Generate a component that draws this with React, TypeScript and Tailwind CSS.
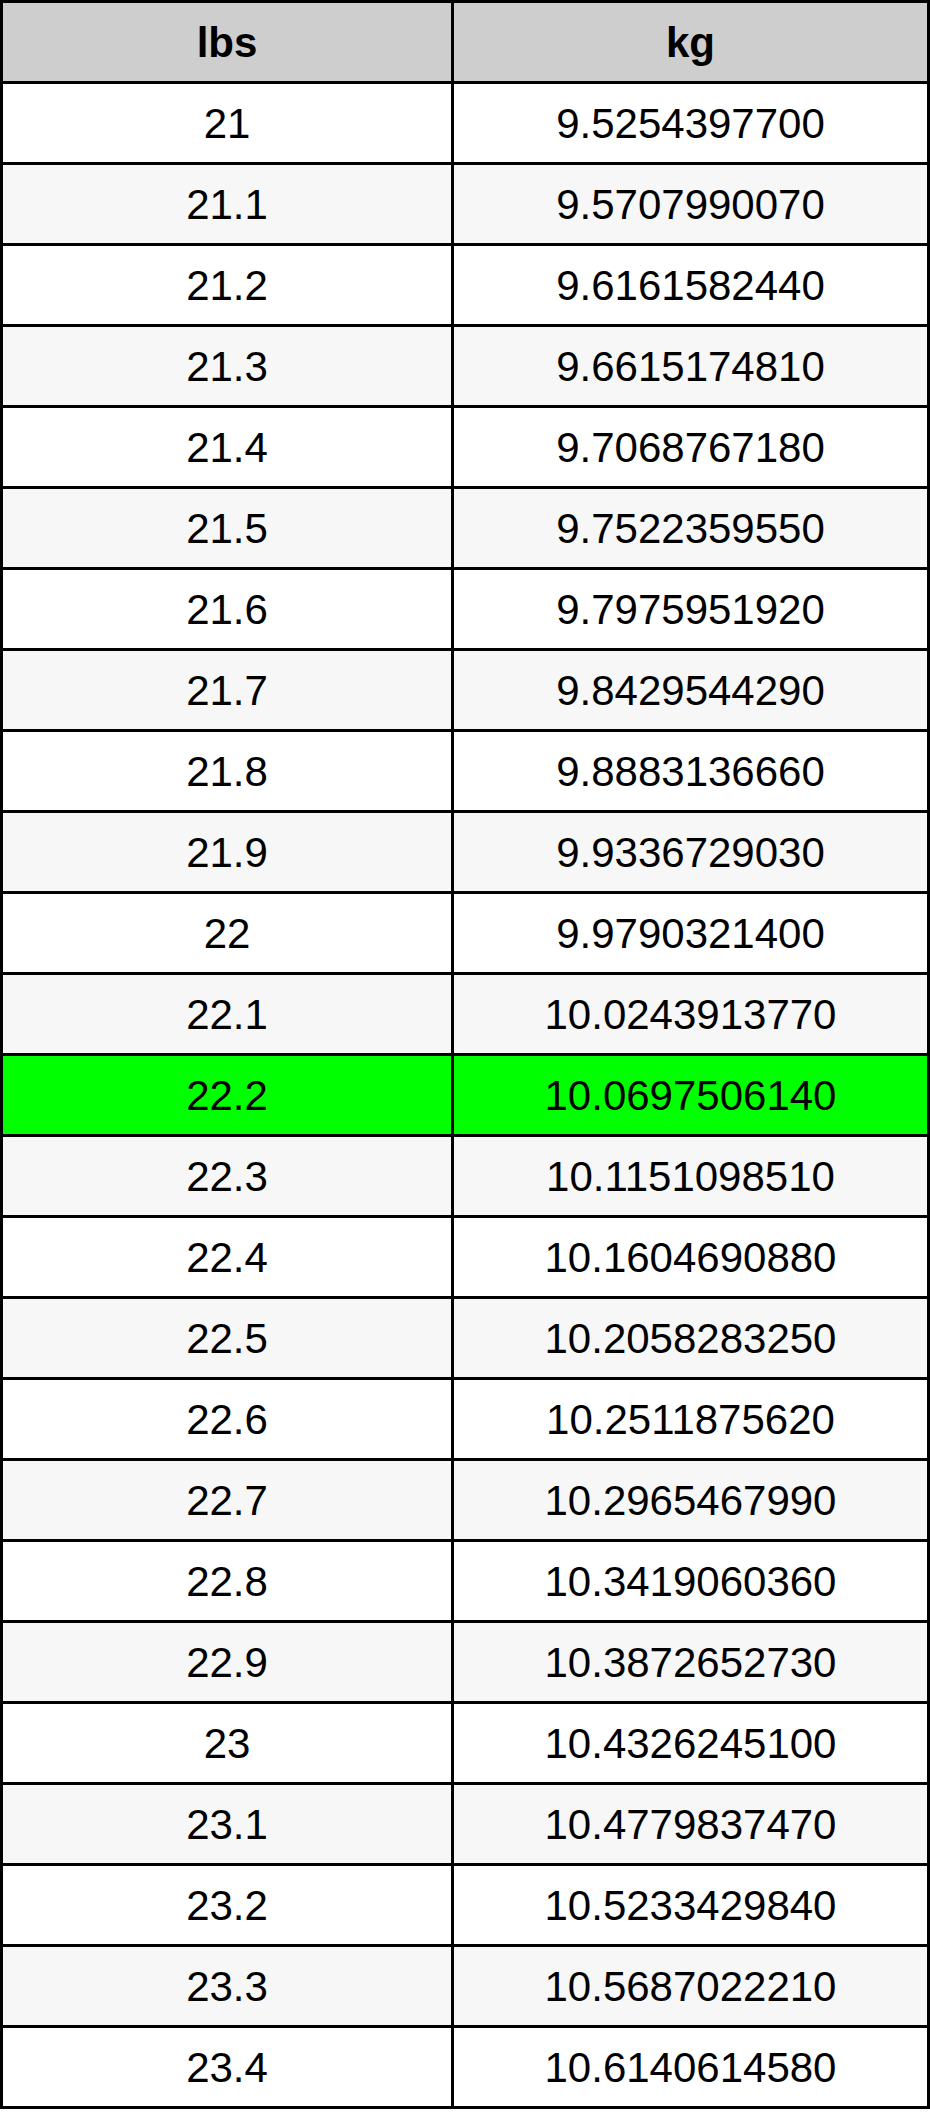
import React from "react";

const rows: [string, string][] = [
  ["21", "9.5254397700"],
  ["21.1", "9.5707990070"],
  ["21.2", "9.6161582440"],
  ["21.3", "9.6615174810"],
  ["21.4", "9.7068767180"],
  ["21.5", "9.7522359550"],
  ["21.6", "9.7975951920"],
  ["21.7", "9.8429544290"],
  ["21.8", "9.8883136660"],
  ["21.9", "9.9336729030"],
  ["22", "9.9790321400"],
  ["22.1", "10.0243913770"],
  ["22.2", "10.0697506140"],
  ["22.3", "10.1151098510"],
  ["22.4", "10.1604690880"],
  ["22.5", "10.2058283250"],
  ["22.6", "10.2511875620"],
  ["22.7", "10.2965467990"],
  ["22.8", "10.3419060360"],
  ["22.9", "10.3872652730"],
  ["23", "10.4326245100"],
  ["23.1", "10.4779837470"],
  ["23.2", "10.5233429840"],
  ["23.3", "10.5687022210"],
  ["23.4", "10.6140614580"],
];

export default function App() {
  return (
    <div className="bg-white w-[930px] min-h-[2115px] font-['Liberation_Sans',Arial,sans-serif] text-black">
      <div className="w-[930px] border-[3px] border-black box-border">
        <div className="flex h-[78px] bg-[#cecece] font-bold text-[42px]">
          <div className="w-[451px] border-r-[3px] border-black flex items-center justify-center">lbs</div>
          <div className="flex-1 flex items-center justify-center">kg</div>
        </div>
        {rows.map(([a, b], i) => {
          const bg = a === "22.2" ? "bg-[#00ff00]" : i % 2 === 0 ? "bg-white" : "bg-[#f7f7f7]";
          return (
            <div key={a} className={`flex h-[81px] border-t-[3px] border-black text-[42px] ${bg}`}>
              <div className="w-[451px] border-r-[3px] border-black flex items-center justify-center">{a}</div>
              <div className="flex-1 flex items-center justify-center">{b}</div>
            </div>
          );
        })}
      </div>
    </div>
  );
}
